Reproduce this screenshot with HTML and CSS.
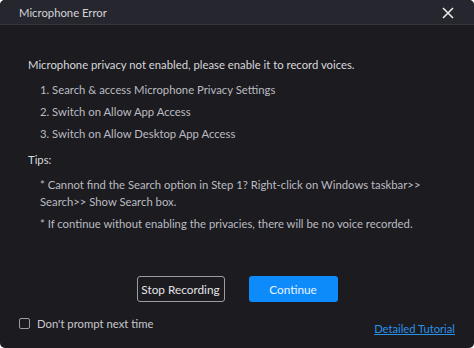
FILE: index.html
```html
<!DOCTYPE html>
<html lang="en">
<head>
    <meta charset="UTF-8">
    <title>Microphone Error</title>
    <link rel="stylesheet" href="styles.css">
</head>
<body>
    <div class="dialog">
        <div class="titlebar">
            <span class="title">Microphone Error</span>
            <svg class="close" width="12" height="12" viewBox="0 0 12 12">
                <path d="M1 1 L11 11 M11 1 L1 11" stroke="#e8e8e8" stroke-width="1.6" fill="none"/>
            </svg>
        </div>
        <div class="content">
            <p class="lead">Microphone privacy not enabled, please enable it to record voices.</p>
            <ol class="steps">
                <li>1. Search &amp; access Microphone Privacy Settings</li>
                <li>2. Switch on Allow App Access</li>
                <li>3. Switch on Allow Desktop App Access</li>
            </ol>
            <p class="tips-title">Tips:</p>
            <div class="tips">
                <p>* Cannot find the Search option in Step 1? Right-click on Windows taskbar&gt;&gt; Search&gt;&gt; Show Search box.</p>
                <p>* If continue without enabling the privacies, there will be no voice recorded.</p>
            </div>
        </div>
        <div class="actions">
            <button class="btn btn-outline">Stop Recording</button>
            <button class="btn btn-primary">Continue</button>
        </div>
        <div class="footer">
            <label class="check"><span class="box"></span>Don't prompt next time</label>
            <a class="link" href="#">Detailed Tutorial</a>
        </div>
    </div>
</body>
</html>
```

FILE: styles.css
```css
html, body {
    margin: 0;
    background: #fff;
}
body {
    font-family: Lato, "Open Sans", sans-serif;
    width: 474px;
    height: 348px;
    overflow: hidden;
}
.dialog {
    width: 474px;
    height: 348px;
    box-sizing: border-box;
    background: #1b1b20;
    border-radius: 5px;
    display: flex;
    flex-direction: column;
    overflow: hidden;
}
.titlebar {
    height: 24px;
    background: #26262e;
    border-bottom: 1px solid #34343c;
    display: flex;
    align-items: center;
    justify-content: space-between;
    padding: 0 20px 0 19px;
}
.title {
    color: #d4d4d8;
    font-size: 11.3px;
}
.close {
    margin-top: 1px;
}
.content {
    padding: 32px 28px 0 28px;
    color: #d8d8dc;
    font-size: 11.3px;
}
.content p {
    margin: 0;
}
.lead {
    line-height: 16px;
}
.steps {
    list-style: none;
    margin: 6px 0 0 0;
    padding: 0 0 0 12px;
    color: #bcbcc0;
}
.steps li {
    line-height: 22px;
}
.tips-title {
    margin-top: 4px !important;
    line-height: 22px;
}
.tips {
    padding: 5px 0 0 12px;
    color: #bcbcc0;
}
.tips p {
    line-height: 17px;
    margin-bottom: 5px;
}
.actions {
    margin-top: auto;
    display: flex;
    justify-content: center;
    gap: 24px;
    padding-bottom: 10px;
}
.btn {
    font-family: inherit;
    font-size: 11.8px;
    height: 26px;
    border-radius: 3px;
    cursor: pointer;
}
.btn-outline {
    background: #1b1b20;
    color: #e4e4e8;
    border: 1px solid #9c9ca2;
    width: 88px;
    padding: 0;
}
.btn-primary {
    background: #0d8bfb;
    color: #e8f3ff;
    border: none;
    width: 89px;
}
.footer {
    display: flex;
    justify-content: space-between;
    align-items: center;
    padding: 0 19px 14px 19px;
    height: 22px;
}
.check {
    display: flex;
    align-items: center;
    gap: 7px;
    color: #c8c8cc;
    font-size: 11.3px;
}
.box {
    width: 9px;
    height: 9px;
    border: 1px solid #9c9ca2;
    border-radius: 2px;
}
.link {
    color: #2a93e8;
    font-size: 11.2px;
    margin-top: 10px;
}
```
